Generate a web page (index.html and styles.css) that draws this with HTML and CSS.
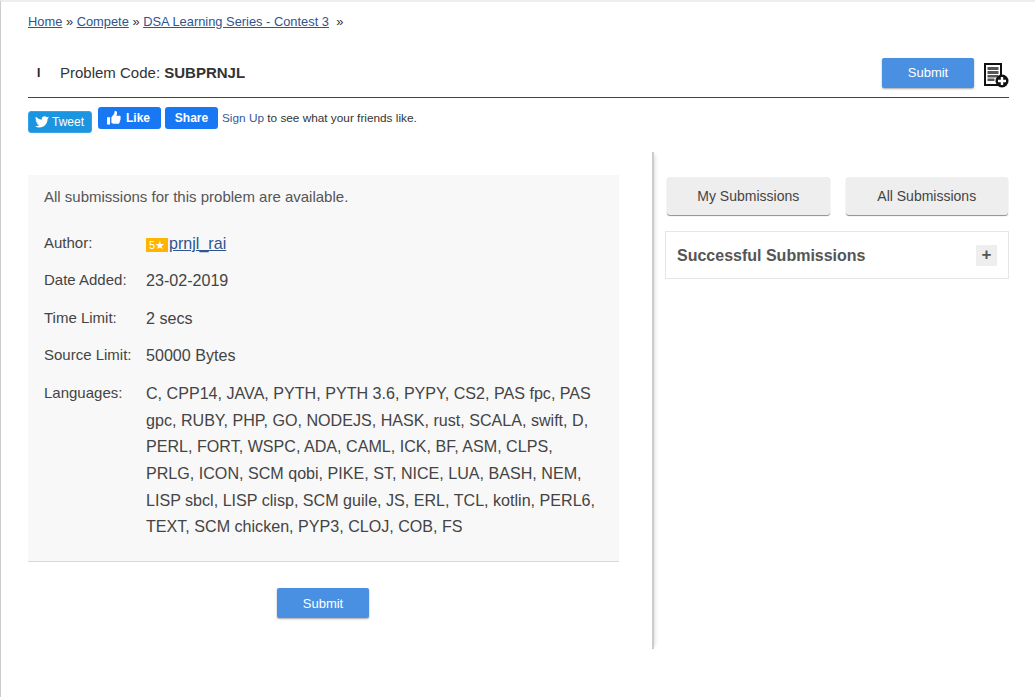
FILE: index.html
```html
<!DOCTYPE html>
<html lang="en">
<head>
<meta charset="utf-8">
<title>Problem Code: SUBPRNJL</title>
<link rel="stylesheet" href="styles.css">
</head>
<body>
<div class="page">
  <nav class="crumbs"><a href="#">Home</a> » <a href="#">Compete</a> » <a href="#">DSA Learning Series - Contest 3</a> &nbsp;»</nav>
  <header class="titlebar">
    <div class="title"><span class="bar">I</span><span>Problem Code: <b>SUBPRNJL</b></span></div>
    <div class="actions">
      <a class="btn-primary" href="#">Submit</a>
      <svg class="addicon" width="25" height="25" viewBox="0 0 25 25" aria-hidden="true">
        <rect x="1" y="1" width="16" height="21" fill="#fff" stroke="#111" stroke-width="2"/>
        <path d="M3.500 4h11v3h-11zM3.500 8h11v3h-11zM3.500 12h11v2.500h-11zM3.500 15.500h7v2.500h-7z" fill="#555"/>
        <circle cx="18" cy="18" r="6.500" fill="#111"/>
        <path d="M18 14v8M14 18h8" stroke="#fff" stroke-width="2.400"/>
      </svg>
    </div>
  </header>
  <div class="social">
    <a class="tweet" href="#">
      <svg width="14" height="12" viewBox="0 0 24 20" aria-hidden="true"><path fill="#fff" d="M24 2.400a9.800 9.800 0 0 1-2.800.8A4.900 4.900 0 0 0 23.300.5a9.800 9.800 0 0 1-3.100 1.200 4.900 4.900 0 0 0-8.400 4.500A14 14 0 0 1 1.700.9a4.900 4.900 0 0 0 1.500 6.600 4.900 4.900 0 0 1-2.200-.6 4.900 4.900 0 0 0 3.900 4.900 4.900 4.900 0 0 1-2.200.1 4.900 4.900 0 0 0 4.600 3.400A9.900 9.900 0 0 1 0 17.300 14 14 0 0 0 7.500 19.500c9.100 0 14.300-7.700 14-14.600A10 10 0 0 0 24 2.400z"/></svg>
      Tweet
    </a>
    <div class="fb">
      <a class="fb-btn" href="#">
        <svg width="14" height="14" viewBox="0 0 16 16" aria-hidden="true"><path fill="#fff" d="M0 7h3.500v8.500H0zM5 7l2.800-3.200c.5-.6.700-1.200.7-2.300 0-1 .5-1.500 1.300-1.500 1 0 1.700 1 1.700 2.400 0 1-.3 2-.8 3h3.500c.9 0 1.500.6 1.500 1.400 0 .5-.2.900-.5 1.200.3.300.5.700.5 1.100 0 .6-.3 1-.8 1.300.1.200.2.500.2.800 0 .6-.4 1.100-.9 1.300.1.200.1.400.1.600 0 .8-.6 1.400-1.500 1.400H8c-1.200 0-2-.3-3-1z"/></svg>
        Like
      </a>
      <a class="fb-btn share" href="#">Share</a>
      <span class="fb-text"><a href="#">Sign Up</a> to see what your friends like.</span>
    </div>
  </div>
  <main class="columns">
    <section class="left">
      <div class="panel">
        <p class="notice">All submissions for this problem are available.</p>
        <dl class="info">
          <dt>Author:</dt>
          <dd class="author"><span class="rating">5★</span><a href="#">prnjl_rai</a></dd>
          <dt>Date Added:</dt>
          <dd>23-02-2019</dd>
          <dt>Time Limit:</dt>
          <dd>2 secs</dd>
          <dt>Source Limit:</dt>
          <dd>50000 Bytes</dd>
          <dt>Languages:</dt>
          <dd class="langs">C, CPP14, JAVA, PYTH, PYTH 3.6, PYPY, CS2, PAS fpc, PAS gpc, RUBY, PHP, GO, NODEJS, HASK, rust, SCALA, swift, D, PERL, FORT, WSPC, ADA, CAML, ICK, BF, ASM, CLPS, PRLG, ICON, SCM qobi, PIKE, ST, NICE, LUA, BASH, NEM, LISP sbcl, LISP clisp, SCM guile, JS, ERL, TCL, kotlin, PERL6, TEXT, SCM chicken, PYP3, CLOJ, COB, FS</dd>
        </dl>
      </div>
      <div class="submit-row"><a class="btn-primary" href="#">Submit</a></div>
    </section>
    <aside class="right">
      <div class="tabs">
        <a class="btn-grey" href="#">My Submissions</a>
        <a class="btn-grey" href="#">All Submissions</a>
      </div>
      <div class="card">
        <h3>Successful Submissions</h3>
        <span class="plus">+</span>
      </div>
    </aside>
  </main>
</div>
</body>
</html>
```
FILE: styles.css
```css
* { box-sizing: border-box; }
html, body { margin: 0; padding: 0; background: #fff; }
body {
  font-family: "Liberation Sans", Arial, sans-serif;
  color: #333;
  height: 697px;
  overflow: hidden;
}
.page {
  height: 697px;
  border-top: 2px solid #eee;
  border-left: 1px solid #ccc;
  padding: 0 27px;
}
a { color: #2e5590; }
.crumbs {
  font-size: 12.870px;
  line-height: 16px;
  padding-top: 12px;
  color: #333;
}
.titlebar {
  height: 56px;
  margin-top: 12px;
  width: 981px;
  border-bottom: 1px solid #444;
  display: flex;
  justify-content: space-between;
  align-items: center;
  padding-top: 6px;
}
.title { font-size: 15px; display: flex; align-items: center; color: #333; }
.bar { width: 32px; padding-left: 9px; font-size: 12px; font-weight: bold; color: #222; }
.actions { display: flex; align-items: center; gap: 10px; }
.addicon { margin-top: 6px; }
.btn-primary {
  display: flex;
  align-items: center;
  justify-content: center;
  width: 92px;
  height: 30px;
  background: #4a90e2;
  color: #fff;
  border-radius: 2px;
  font-size: 13px;
  text-decoration: none;
  box-shadow: 0 1px 2px rgba(0,0,0,.35);
}
.social { display: flex; align-items: flex-start; margin-top: 9px; height: 45px; }
.tweet {
  display: flex;
  align-items: center;
  gap: 3px;
  width: 64px;
  height: 22px;
  margin-top: 4px;
  padding-left: 6px;
  background: #1b95e0;
  border: 1px solid #38a3e4;
  border-radius: 3px;
  color: #fff;
  font-size: 12px;
  text-decoration: none;
}
.fb { display: flex; align-items: center; margin-left: 6px; height: 22px; }
.fb-btn {
  display: flex;
  align-items: center;
  gap: 5px;
  height: 22px;
  width: 63px;
  padding-left: 9px;
  background: #1877f2;
  border-radius: 3px;
  color: #fff;
  font-weight: bold;
  font-size: 12px;
  text-decoration: none;
}
.share { width: 53px; margin-left: 4px; padding-left: 0; justify-content: center; }
.fb-text { margin-left: 4px; font-size: 11.800px; color: #333; }
.fb-text a { color: #365899; text-decoration: none; }
.columns { display: flex; height: 497px; }
.left {
  width: 626px;
  flex: none;
  padding-top: 23px;
  border-right: 2px solid #ccc;
  box-shadow: 4px 0 4px -3px rgba(0,0,0,.15);
}
.panel {
  width: 591px;
  height: 387px;
  background: #f8f8f8;
  border-bottom: 1px solid #d8d8d8;
  padding: 12px 16px 0;
}
.notice { margin: 0 0 23px; font-size: 15px; line-height: 20px; color: #555; }
.info {
  margin: 0;
  display: grid;
  grid-template-columns: 102px 1fr;
  font-size: 15px;
  line-height: 26.670px;
  color: #444;
  row-gap: 10.800px;
}
.info dt { color: #444; }
.info dd { margin: 0; color: #444; font-size: 16.100px; }
.author { display: flex; align-items: center; margin-left: -1px; }
.rating {
  display: inline-block;
  width: 22px;
  height: 14px;
  margin-right: 1px;
  margin-top: 3px;
  background: #ffb400;
  color: #fff;
  font-size: 11px;
  line-height: 14px;
  text-align: center;
}
.submit-row { width: 590px; display: flex; justify-content: center; margin-top: 26px; }
.right {
  flex: none;
  width: 354px;
  padding: 25px 0 0 13px;
}
.tabs { display: flex; gap: 16px; }
.btn-grey {
  display: flex;
  align-items: center;
  justify-content: center;
  width: 162.500px;
  height: 38px;
  background: #eee;
  color: #444;
  border-radius: 3px;
  font-size: 14px;
  text-decoration: none;
  box-shadow: 0 1px 1px rgba(0,0,0,.45);
}
.card {
  width: 344px;
  height: 48px;
  margin: 16px 0 0 -2px;
  border: 1px solid #e6e6e6;
  display: flex;
  align-items: center;
  justify-content: space-between;
  padding: 1px 11px 0;
}
.card h3 { margin: 0; font-size: 16px; font-weight: bold; color: #555; }
.plus {
  width: 21px;
  height: 21px;
  background: #eee;
  color: #555;
  font-weight: bold;
  font-size: 17px;
  line-height: 20px;
  text-align: center;
}
```
